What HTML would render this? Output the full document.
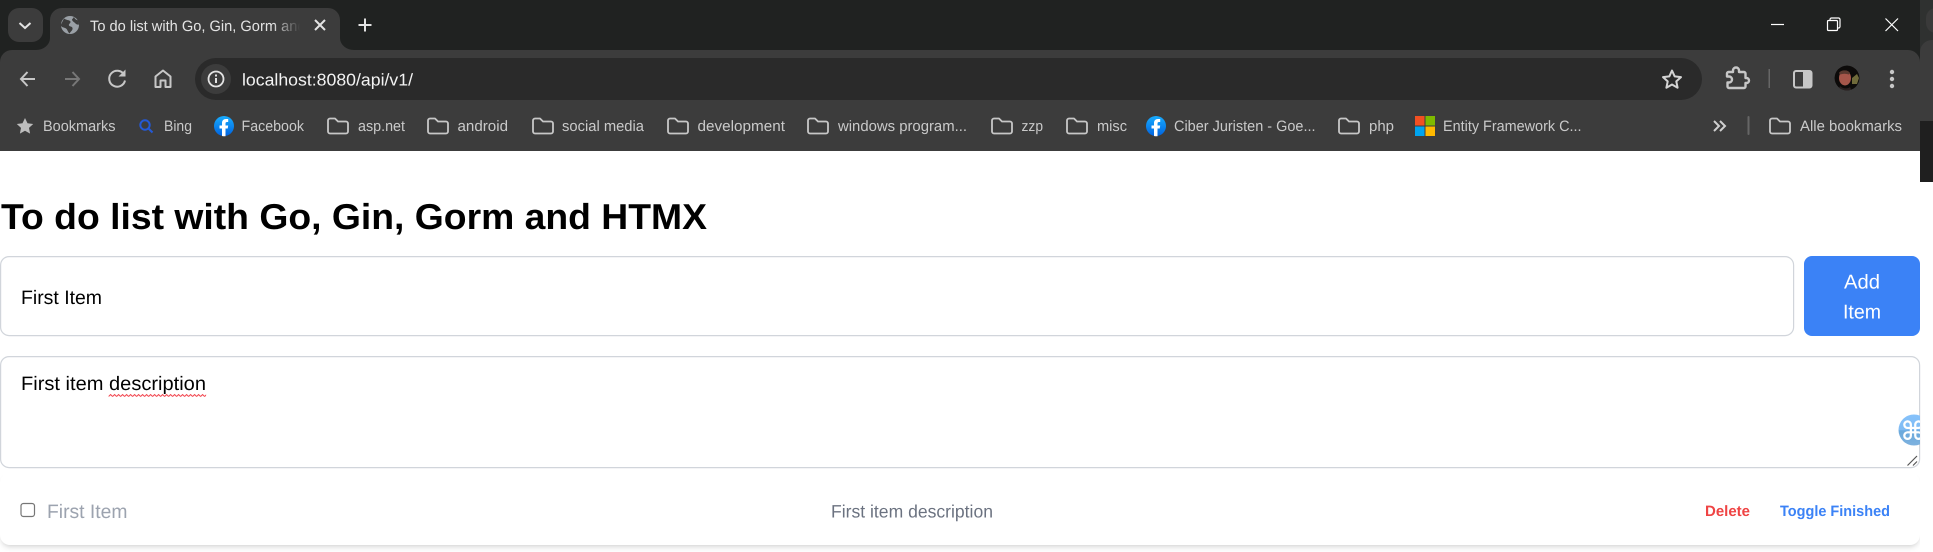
<!DOCTYPE html>
<html lang="en">
<head>
<meta charset="utf-8">
<title>To do list with Go, Gin, Gorm and HTMX</title>
<style>
html,body{margin:0;padding:0;background:#fff;width:1933px;height:552px;overflow:hidden}
#clip{position:absolute;left:0;top:0;width:1920px;height:552px;overflow:hidden}
#card{position:absolute;left:0;top:473px;width:1920px;height:72px;background:#fff;border-radius:10px;box-shadow:0 4px 6px -1px rgba(0,0,0,.1),0 2px 4px -2px rgba(0,0,0,.1)}
svg{position:absolute;left:0;top:0;display:block}
text{font-family:"Liberation Sans",sans-serif;text-rendering:geometricPrecision}
.bm{font-size:15px;fill:#c9c9c9}
.fo{fill:none;stroke:#c7c7c7;stroke-width:1.8;stroke-linejoin:round}
.ic{fill:none;stroke:#c7c7c7;stroke-width:2.4;stroke-linejoin:round}
</style>
</head>
<body>
<div id="clip"><div id="card"></div></div>
<svg width="1933" height="552" viewBox="0 0 1933 552" xmlns="http://www.w3.org/2000/svg">
<defs>
<linearGradient id="fb" x1="0" y1="0" x2="0" y2="1"><stop offset="0" stop-color="#18acfe"/><stop offset="1" stop-color="#0163e0"/></linearGradient>
<linearGradient id="fade" gradientUnits="userSpaceOnUse" x1="272" y1="0" x2="300" y2="0"><stop offset="0" stop-color="#e3e3e3"/><stop offset="1" stop-color="#e3e3e3" stop-opacity="0"/></linearGradient>
<linearGradient id="cmd" x1="0" y1="0" x2="0" y2="1"><stop offset="0" stop-color="#86c2fb"/><stop offset=".5" stop-color="#80bbf3"/><stop offset=".52" stop-color="#6ba9dc"/><stop offset="1" stop-color="#7db1de"/></linearGradient>
<pattern id="sq" patternUnits="userSpaceOnUse" x="108.6" y="393.5" width="4" height="3.5"><path d="M0 3 L2 1 L4 3" fill="none" stroke="#f0353f" stroke-width=".9"/></pattern>
<clipPath id="tabclip"><rect x="85" y="8" width="215" height="40"/></clipPath>
<clipPath id="pageclip"><rect x="0" y="0" width="1920" height="552"/></clipPath>
<clipPath id="av"><circle cx="1847" cy="78" r="12.5"/></clipPath>
<path id="f" class="fo" d="M1 4.5a2 2 0 0 1 2-2h5l3 3h8a2 2 0 0 1 2 2v8a2 2 0 0 1-2 2H3a2 2 0 0 1-2-2z"/>
</defs>

<!-- window frame -->
<rect x="0" y="0" width="1920" height="151" fill="#202221"/>
<rect x="1920" y="0" width="13" height="121" fill="#2f3130"/>
<rect x="1926" y="8" width="20" height="25" rx="10" fill="#3a3a3a"/>
<path d="M1920 121V52a12 12 0 0 1 12-12h1v81z" fill="#3c3c3c"/>
<rect x="1920" y="121" width="13" height="61" fill="#1f1f1f"/>

<!-- tabs -->
<rect x="8" y="8" width="35" height="34" rx="11" fill="#3c3c3c"/>
<path d="M19.500 23l5.500 5 5.500-5" fill="none" stroke="#e3e3e3" stroke-width="2"/>
<path d="M36 50a14 12 0 0 0 14-12V20a12 12 0 0 1 12-12h266a12 12 0 0 1 12 12v18a14 12 0 0 0 14 12z" fill="#3c3c3c"/>
<circle cx="70" cy="25" r="9" fill="#9aa0a6"/>
<path d="M64 18.500c3 2 4 1 6 2.500s-2 3-1 4.500 3 .5 3.500 2.500-1.500 3-3 5.500c-2-2-2-4-3.500-5s-4-1-5.500-3zM74 17c1 2 2 3 4.500 3.500l.5 4c-2 .5-3-.5-4-1.500s-3-2-3-3.500z" fill="#3c3c3c"/>
<text x="90" y="31" font-size="15" fill="url(#fade)" textLength="261" lengthAdjust="spacingAndGlyphs" clip-path="url(#tabclip)">To do list with Go, Gin, Gorm and HTMX</text>
<path d="M315 20l10 10M325 20l-10 10" stroke="#e3e3e3" stroke-width="2" fill="none"/>
<path d="M365 18.500v13M358.500 25h13" stroke="#e3e3e3" stroke-width="2" fill="none"/>

<!-- window controls -->
<path d="M1771 24.500h13" stroke="#fff" stroke-width="1.200"/>
<rect x="1827.500" y="20.500" width="10" height="10" rx="1" fill="none" stroke="#fff" stroke-width="1.200"/>
<path d="M1830 20.500v-1a1.500 1.500 0 0 1 1.500-1.500h7a1.500 1.500 0 0 1 1.500 1.500v7a1.500 1.500 0 0 1-1.500 1.500h-1" fill="none" stroke="#fff" stroke-width="1.200"/>
<path d="M1885.500 18.500l12.500 12.500M1898 18.500l-12.500 12.500" stroke="#fff" stroke-width="1.200" fill="none"/>

<!-- toolbar -->
<path d="M0 151V62a12 12 0 0 1 12-12h1896a12 12 0 0 1 12 12v89z" fill="#3c3c3c"/>
<path d="M35 79H21M27.500 72L21 79l6.500 7" fill="none" stroke="#c7c7c7" stroke-width="2"/>
<path d="M65 79h14M72.500 72l6.500 7-6.500 7" fill="none" stroke="#777" stroke-width="2"/>
<path d="M124 74.500a8 8 0 1 0 1 6" fill="none" stroke="#c7c7c7" stroke-width="2"/>
<path d="M125.500 69.500v7h-7z" fill="#c7c7c7"/>
<path d="M155.500 87V76.500l7.500-6 7.500 6V87h-5v-6.500h-5V87z" fill="none" stroke="#c7c7c7" stroke-width="2" stroke-linejoin="round"/>

<!-- address bar -->
<rect x="195" y="58" width="1507" height="42" rx="21" fill="#2a2a2a"/>
<circle cx="216" cy="79" r="15" fill="#3c3c3c"/>
<circle cx="216" cy="79" r="7.500" fill="none" stroke="#e3e3e3" stroke-width="1.800"/>
<rect x="215" y="78" width="2" height="5" fill="#e3e3e3"/><rect x="215" y="74.500" width="2" height="2" fill="#e3e3e3"/>
<text x="242" y="85.500" font-size="17" fill="#f3f3f3" textLength="171" lengthAdjust="spacingAndGlyphs">localhost:8080/api/v1/</text>
<path d="M1672 70.500l2.700 5.900 6.300.7-4.700 4.300 1.300 6.300-5.600-3.200-5.600 3.200 1.300-6.300-4.700-4.300 6.300-.7z" fill="none" stroke="#d4d4d4" stroke-width="2" stroke-linejoin="round"/>
<path d="M1733 72v-1.500a3 3 0 0 1 6 0V72h5a1.500 1.500 0 0 1 1.500 1.500v4.500h1a2.500 2.500 0 0 1 0 5h-1v3.500a1.500 1.500 0 0 1-1.500 1.500h-15a1.500 1.500 0 0 1-1.500-1.500v-4h1.500a3 3 0 0 0 0-6H1727v-3a1.500 1.500 0 0 1 1.500-1.500z" class="ic"/>
<rect x="1768.500" y="69" width="1.500" height="19" fill="#666"/>
<rect x="1794" y="71" width="17.500" height="16.500" rx="2" fill="none" stroke="#c7c7c7" stroke-width="2"/>
<rect x="1803" y="71" width="8.500" height="16.500" fill="#c7c7c7"/>
<g clip-path="url(#av)">
<circle cx="1847" cy="78" r="12.500" fill="#0d0b0a"/>
<ellipse cx="1845" cy="78" rx="6" ry="7.500" fill="#a5564a"/>
<path d="M1839 73c2-3.500 9-3.500 11 0l-1 1.500c-3-1-6-1-9 0z" fill="#5a3a30"/>
<path d="M1852 78l5-4 2 4-2 6h-5z" fill="#6f6a3a"/>
<path d="M1840 86c3 3 8 3 10 1l2 4h-14z" fill="#2a2020"/>
</g>
<circle cx="1892" cy="72" r="2.200" fill="#c7c7c7"/><circle cx="1892" cy="79" r="2.200" fill="#c7c7c7"/><circle cx="1892" cy="86" r="2.200" fill="#c7c7c7"/>

<!-- bookmarks -->
<path d="M25 118l2.500 5.300 5.700.7-4.200 3.900 1.100 5.700L25 130.800l-5.100 2.800 1.100-5.700-4.200-3.900 5.700-.7z" fill="#bdbdbd"/>
<text class="bm" x="43" y="131" textLength="72.500" lengthAdjust="spacingAndGlyphs">Bookmarks</text>
<circle cx="145" cy="125" r="4.700" fill="none" stroke="#2459d6" stroke-width="2"/><path d="M148.500 128.500l4 4" stroke="#2459d6" stroke-width="2"/>
<text class="bm" x="164" y="131" textLength="28" lengthAdjust="spacingAndGlyphs">Bing</text>
<circle cx="224" cy="126" r="10" fill="url(#fb)"/>
<path d="M222 136v-7.500h-2.500v-3H222V123c0-2.500 1.500-4 4-4h2.200v3H227c-1 0-1.500.6-1.500 1.500v2h2.700l-.5 3h-2.200v7.700a10 10 0 0 1-3.500-.2z" fill="#fff"/>
<text class="bm" x="241.500" y="131" textLength="62.500" lengthAdjust="spacingAndGlyphs">Facebook</text>

<use href="#f" x="327" y="116"/><text class="bm" x="358" y="131" textLength="47" lengthAdjust="spacingAndGlyphs">asp.net</text>
<use href="#f" x="427" y="116"/><text class="bm" x="457.500" y="131" textLength="50.500" lengthAdjust="spacingAndGlyphs">android</text>
<use href="#f" x="532" y="116"/><text class="bm" x="562" y="131" textLength="82" lengthAdjust="spacingAndGlyphs">social media</text>
<use href="#f" x="667" y="116"/><text class="bm" x="697.500" y="131" textLength="87.500" lengthAdjust="spacingAndGlyphs">development</text>
<use href="#f" x="807" y="116"/><text class="bm" x="838" y="131" textLength="129" lengthAdjust="spacingAndGlyphs">windows program...</text>
<use href="#f" x="991" y="116"/><text class="bm" x="1021.500" y="131" textLength="21.500" lengthAdjust="spacingAndGlyphs">zzp</text>
<use href="#f" x="1066" y="116"/><text class="bm" x="1097" y="131" textLength="30" lengthAdjust="spacingAndGlyphs">misc</text>
<circle cx="1156" cy="126" r="10" fill="url(#fb)"/>
<path d="M1154 136v-7.500h-2.500v-3h2.500V123c0-2.500 1.500-4 4-4h2.200v3H1159c-1 0-1.500.6-1.500 1.500v2h2.700l-.5 3h-2.200v7.700a10 10 0 0 1-3.500-.2z" fill="#fff"/>
<text class="bm" x="1174" y="131" textLength="141.500" lengthAdjust="spacingAndGlyphs">Ciber Juristen - Goe...</text>
<use href="#f" x="1338" y="116"/><text class="bm" x="1369" y="131" textLength="25" lengthAdjust="spacingAndGlyphs">php</text>
<rect x="1415" y="116" width="9.500" height="9.500" fill="#f25022"/><rect x="1425.500" y="116" width="9.500" height="9.500" fill="#7fba00"/>
<rect x="1415" y="126.500" width="9.500" height="9.500" fill="#00a4ef"/><rect x="1425.500" y="126.500" width="9.500" height="9.500" fill="#ffb900"/>
<text class="bm" x="1443" y="131" textLength="138.500" lengthAdjust="spacingAndGlyphs">Entity Framework C...</text>
<path d="M1714 121l5 5-5 5M1720 121l5 5-5 5" fill="none" stroke="#d0d0d0" stroke-width="2"/>
<rect x="1747.500" y="116" width="2" height="19" rx="1" fill="#666"/>
<use href="#f" x="1769" y="116"/><text class="bm" x="1800" y="131" textLength="102" lengthAdjust="spacingAndGlyphs">Alle bookmarks</text>

<!-- page -->
<text x="1" y="229" font-size="36" font-weight="700" fill="#000" textLength="706" lengthAdjust="spacingAndGlyphs">To do list with Go, Gin, Gorm and HTMX</text>

<rect x=".6" y="256.600" width="1793" height="79" rx="8.500" fill="#fff" stroke="#d1d5db" stroke-width="1.200"/>
<text x="21" y="304" font-size="19.500" fill="#000" textLength="81" lengthAdjust="spacingAndGlyphs">First Item</text>
<rect x="1804" y="256" width="116" height="80" rx="8" fill="#3b82f6"/>
<text x="1844" y="288.500" font-size="20" fill="#fff" textLength="36" lengthAdjust="spacingAndGlyphs">Add</text>
<text x="1843" y="318.500" font-size="20" fill="#fff" textLength="38" lengthAdjust="spacingAndGlyphs">Item</text>

<rect x=".6" y="356.600" width="1919" height="111" rx="8.500" fill="#fff" stroke="#d1d5db" stroke-width="1.200"/>
<text x="21" y="390" font-size="19.500" fill="#000" textLength="185" lengthAdjust="spacingAndGlyphs">First item description</text>
<rect x="108.600" y="393.500" width="97.500" height="3.500" fill="url(#sq)"/>
<g clip-path="url(#pageclip)">
<circle cx="1914" cy="430" r="15.500" fill="url(#cmd)"/>
<text x="1901" y="440" font-size="26" font-weight="700" fill="#fff" style='font-family:"DejaVu Sans",sans-serif'>⌘</text>
</g>
<path d="M1907.500 465.500l9.500-9.500M1913 465.500l4-4" stroke="#555" stroke-width="1.200" fill="none"/>

<rect x="21" y="503.500" width="13.500" height="13" rx="2.500" fill="#fff" stroke="#767676" stroke-width="1.200"/>
<text x="47" y="518" font-size="19.500" fill="#9ca3af" textLength="80.500" lengthAdjust="spacingAndGlyphs">First Item</text>
<text x="831" y="517.500" font-size="18" fill="#6b7280" textLength="162" lengthAdjust="spacingAndGlyphs">First item description</text>
<text x="1705" y="516" font-size="15" font-weight="700" fill="#ef4444" textLength="45" lengthAdjust="spacingAndGlyphs">Delete</text>
<text x="1780" y="516" font-size="15" font-weight="700" fill="#3b82f6" textLength="110" lengthAdjust="spacingAndGlyphs">Toggle Finished</text>
</svg>
</body>
</html>
